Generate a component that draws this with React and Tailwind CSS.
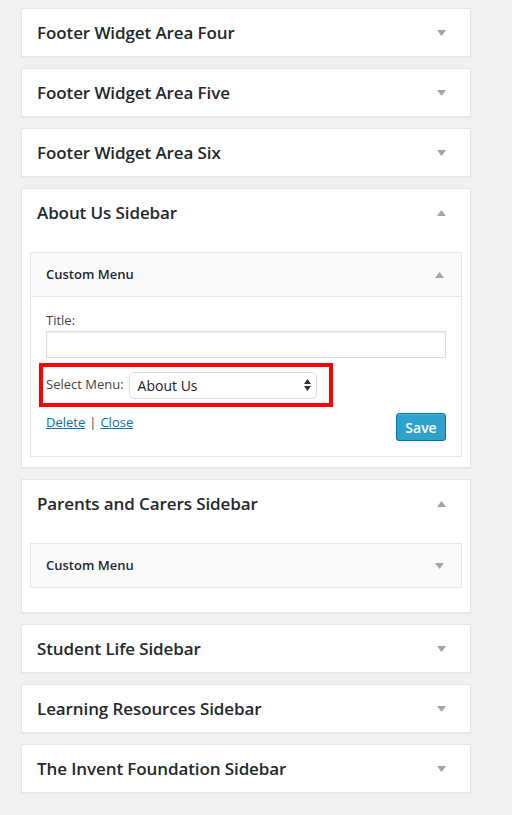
const font = { fontFamily: '"Open Sans", "Noto Sans", sans-serif' };

function Caret({ up = false }) {
  return (
    <svg width="9" height="6" viewBox="0 0 9 6" className="shrink-0">
      <path d={up ? "M0 6 L4.5 0 L9 6 Z" : "M0 0 L9 0 L4.5 6 Z"} fill="#a0a5aa" />
    </svg>
  );
}

function Area({ title, open = false, children, bottom = "pb-[10px]" }) {
  return (
    <div className="border border-[#e5e5e5] bg-white shadow-[0_1px_1px_rgba(0,0,0,0.04)]">
      <div className="flex h-[47px] items-center justify-between pl-[15px] pr-[24px]">
        <h2 className="text-[17px] font-semibold tracking-[-0.1px] text-[#23282d]">{title}</h2>
        <Caret up={open} />
      </div>
      {open && <div className={`px-[8px] pt-[16px] ${bottom}`}>{children}</div>}
    </div>
  );
}

function WidgetHead({ open }) {
  return (
    <div className="flex h-[43px] items-center justify-between bg-[#fafafa] pl-[15px] pr-[17px]">
      <span className="text-[13px] font-semibold text-[#23282d]">Custom Menu</span>
      <Caret up={open} />
    </div>
  );
}

export default function App() {
  return (
    <div style={font} className="min-h-[815px] bg-[#f1f1f1] pt-[8px] pl-[21px] pr-[41px]">
      <div className="flex flex-col gap-[11px]">
        <Area title="Footer Widget Area Four" />
        <Area title="Footer Widget Area Five" />
        <Area title="Footer Widget Area Six" />

        <Area title="About Us Sidebar" open>
          <div className="border border-[#e5e5e5] bg-white">
            <WidgetHead open />
            <div className="border-t border-[#e5e5e5] px-[15px] pt-[15px] pb-[15px] text-[13px] text-[#444]">
              <p className="leading-[16px]">Title:</p>
              <div className="mt-[3px] h-[27px] border border-[#dddddd] shadow-[inset_0_1px_2px_rgba(0,0,0,0.07)]" />
              <div className="mt-[5px] -ml-[7px] flex h-[44px] w-[294px] items-center border-[4px] border-[#ff0000] pl-[3px]">
                <span>Select Menu:</span>
                <div className="ml-[5px] flex h-[27px] w-[188px] items-center justify-between rounded-[5px] border border-[#dddddd] pl-[8px] pr-[5px] text-[14px] text-[#222]">
                  <span>About Us</span>
                  <svg width="7" height="12" viewBox="0 0 7 12">
                    <path d="M0 5 L3.5 0 L7 5 Z M0 7 L7 7 L3.5 12 Z" fill="#333" />
                  </svg>
                </div>
              </div>
              <div className="mt-[6px] flex items-start justify-between">
                <div>
                  <a className="text-[#0073aa] underline">Delete</a>
                  <span className="mx-[4px]">|</span>
                  <a className="text-[#0073aa] underline">Close</a>
                </div>
                <button className="h-[28px] w-[50px] rounded-[3px] border border-[#0074a2] bg-[#2ea2cc] text-[14px] font-semibold text-white shadow-[inset_0_1px_0_rgba(120,200,230,0.5)]">
                  Save
                </button>
              </div>
            </div>
          </div>
        </Area>

        <Area title="Parents and Carers Sidebar" open bottom="pb-[24px]">
          <div className="border border-[#e5e5e5] bg-[#fafafa]">
            <WidgetHead open={false} />
          </div>
        </Area>

        <Area title="Student Life Sidebar" />
        <Area title="Learning Resources Sidebar" />
        <Area title="The Invent Foundation Sidebar" />
      </div>
    </div>
  );
}
